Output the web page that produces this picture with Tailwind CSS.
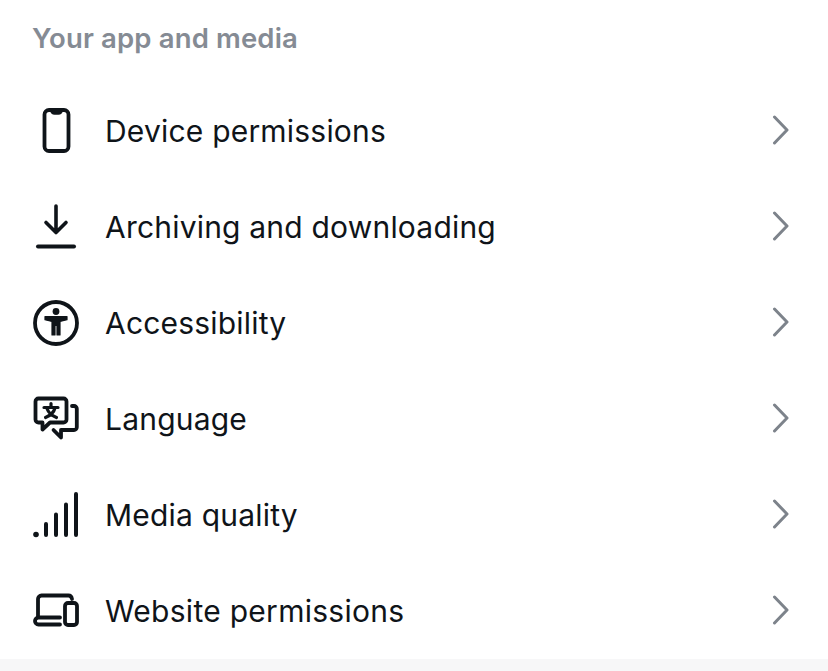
<!doctype html>
<html lang="en">
<head>
<meta charset="utf-8">
<title>Your app and media</title>
<script src="https://cdn.jsdelivr.net/npm/@tailwindcss/browser@4"></script>
</head>
<body class="bg-white font-['Inter',sans-serif] text-[#0f1419] overflow-hidden">
<div class="h-[671px] flex flex-col">
  <h2 class="pl-[32px] h-[83px] pt-[21px] text-[27.5px] leading-[34px] tracking-[0.15px] font-semibold text-[#858b94]">Your app and media</h2>

  <ul class="flex flex-col">
    <li class="h-[96px] flex items-center pl-[33px] pr-[38px]">
      <span class="w-[72px] shrink-0">
        <svg class="w-[46px] h-[46px]" viewBox="0 0 46 46" fill="none" stroke="currentColor" stroke-width="3.800" stroke-linejoin="round">
          <rect x="11.500" y="2" width="24" height="41" rx="4.500"/>
          <path d="M18 2.500c.6 2.600 1.600 3.200 3.500 3.200h4c1.900 0 2.900-.6 3.500-3.200" stroke-width="2" fill="currentColor"/>
        </svg>
      </span>
      <span class="flex-1 text-[30px] leading-[40px] tracking-[0.2px]">Device permissions</span>
      <svg class="w-[18px] h-[30px] -mt-[2px]" viewBox="0 0 18 30" fill="none" stroke="#7d838b" stroke-width="3" stroke-linecap="round" stroke-linejoin="round"><path d="M2.500 2 15 15 2.500 28"/></svg>
    </li>

    <li class="h-[96px] flex items-center pl-[33px] pr-[38px]">
      <span class="w-[72px] shrink-0">
        <svg class="w-[46px] h-[46px]" viewBox="0 0 46 46" fill="none" stroke="currentColor" stroke-width="3.600" stroke-linecap="round" stroke-linejoin="round">
          <path d="M23 2v26M13 18.500 23 28.500 33 18.500"/>
          <path d="M5 42.500h36" stroke-width="4"/>
        </svg>
      </span>
      <span class="flex-1 text-[30px] leading-[40px] tracking-[0.2px]">Archiving and downloading</span>
      <svg class="w-[18px] h-[30px] -mt-[2px]" viewBox="0 0 18 30" fill="none" stroke="#7d838b" stroke-width="3" stroke-linecap="round" stroke-linejoin="round"><path d="M2.500 2 15 15 2.500 28"/></svg>
    </li>

    <li class="h-[96px] flex items-center pl-[33px] pr-[38px]">
      <span class="w-[72px] shrink-0">
        <svg class="w-[46px] h-[46px]" viewBox="0 0 46 46" fill="none">
          <circle cx="23" cy="23" r="21" stroke="currentColor" stroke-width="3.800"/>
          <circle cx="23" cy="11.500" r="3.400" fill="currentColor"/>
          <path d="M12 16.500h22v3.200l-7 1.700V35h-3v-9.500h-2V35h-3V21.400l-7-1.700z" fill="currentColor" stroke="currentColor" stroke-width="1.200" stroke-linejoin="round"/>
        </svg>
      </span>
      <span class="flex-1 text-[30px] leading-[40px] tracking-[0.2px]">Accessibility</span>
      <svg class="w-[18px] h-[30px] -mt-[2px]" viewBox="0 0 18 30" fill="none" stroke="#7d838b" stroke-width="3" stroke-linecap="round" stroke-linejoin="round"><path d="M2.500 2 15 15 2.500 28"/></svg>
    </li>

    <li class="h-[96px] flex items-center pl-[33px] pr-[38px]">
      <span class="w-[72px] shrink-0">
        <svg class="w-[46px] h-[46px]" viewBox="0 0 46 46" fill="none" stroke="currentColor" stroke-width="3.800" stroke-linecap="round" stroke-linejoin="round">
          <path d="M5.500 2.500h25a3 3 0 0 1 3 3v18a3 3 0 0 1-3 3H17l-7.500 7v-7h-4a3 3 0 0 1-3-3v-18a3 3 0 0 1 3-3z"/>
          <path d="M39 10h2a2.800 2.800 0 0 1 2.800 2.800v18.400A2.800 2.800 0 0 1 41 34H28v7.500L20.500 34"/>
          <path d="M11 11.500h14M18 7.500v4M22 12c-1.200 4.500-4.500 7.500-9.500 9.500M14 12.500c1.400 4 4.500 7 9.500 9" stroke-width="3.200"/>
        </svg>
      </span>
      <span class="flex-1 text-[30px] leading-[40px] tracking-[0.2px]">Language</span>
      <svg class="w-[18px] h-[30px] -mt-[2px]" viewBox="0 0 18 30" fill="none" stroke="#7d838b" stroke-width="3" stroke-linecap="round" stroke-linejoin="round"><path d="M2.500 2 15 15 2.500 28"/></svg>
    </li>

    <li class="h-[96px] flex items-center pl-[33px] pr-[38px]">
      <span class="w-[72px] shrink-0">
        <svg class="w-[46px] h-[46px]" viewBox="0 0 46 46" fill="none" stroke="currentColor" stroke-width="4" stroke-linecap="round">
          <circle cx="3" cy="42.500" r="2.800" fill="currentColor" stroke="none"/>
          <path d="M13 32v11M23 22.500v20.500M33 12.500v30.500M43 2v41"/>
        </svg>
      </span>
      <span class="flex-1 text-[30px] leading-[40px] tracking-[0.2px]">Media quality</span>
      <svg class="w-[18px] h-[30px] -mt-[2px]" viewBox="0 0 18 30" fill="none" stroke="#7d838b" stroke-width="3" stroke-linecap="round" stroke-linejoin="round"><path d="M2.500 2 15 15 2.500 28"/></svg>
    </li>

    <li class="h-[96px] flex items-center pl-[33px] pr-[38px]">
      <span class="w-[72px] shrink-0">
        <svg class="w-[46px] h-[46px]" viewBox="0 0 46 46" fill="none" stroke="currentColor" stroke-width="3.800" stroke-linecap="round" stroke-linejoin="round">
          <path d="M39 11c-.5-2.500-1.700-3.500-3.500-3.500h-27A3.500 3.500 0 0 0 5 11v18"/>
          <path d="M27 29.500H5.500C3.500 29.500 2 31 2 33s1.500 3.500 3.500 3.500H27"/>
          <rect x="32" y="15" width="12" height="22" rx="3"/>
        </svg>
      </span>
      <span class="flex-1 text-[30px] leading-[40px] tracking-[0.28px]">Website permissions</span>
      <svg class="w-[18px] h-[30px] -mt-[2px]" viewBox="0 0 18 30" fill="none" stroke="#7d838b" stroke-width="3" stroke-linecap="round" stroke-linejoin="round"><path d="M2.500 2 15 15 2.500 28"/></svg>
    </li>
  </ul>

  <div class="flex-1 bg-[#f7f7f8]"></div>
</div>
</body>
</html>
